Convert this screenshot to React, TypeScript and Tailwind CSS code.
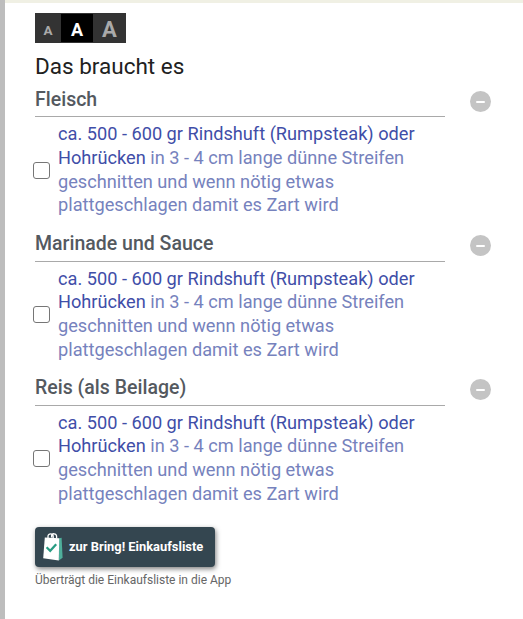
type SectionProps = {
  title: string;
  headClass: string;
  bodyClass: string;
  checkClass: string;
  sectionClass: string;
};

function Ingredient({ checkClass }: { checkClass: string }) {
  return (
    <label className="flex">
      <input
        type="checkbox"
        className={`${checkClass} -ml-[2px] size-[17px] shrink-0 appearance-none rounded-[3px] border-[1.5px] border-[#767676] bg-white`}
      />
      <span className="ml-[8px] whitespace-nowrap text-[18.2px] leading-[23.7px] text-[#7682bd]">
        <span className="text-[#3f4ea8]">ca. 500 - 600 gr Rindshuft (Rumpsteak) oder</span>
        <br />
        <span className="text-[#3f4ea8]">Hohrücken</span> in 3 - 4 cm lange dünne Streifen
        <br />
        geschnitten und wenn nötig etwas
        <br />
        plattgeschlagen damit es Zart wird
      </span>
    </label>
  );
}

function Section({ title, headClass, bodyClass, checkClass, sectionClass }: SectionProps) {
  return (
    <section className={sectionClass}>
      <div className={`flex ${headClass}`}>
        <h3 className="h-full w-[410px] border-b border-[#a9a9a9] text-[19.5px] leading-[29px] font-medium text-[#54595f]">
          {title}
        </h3>
        <button
          aria-label="Zuklappen"
          className="mt-[6px] ml-[25px] flex size-[21px] items-center justify-center rounded-full bg-[#c4c4c4]"
        >
          <span className="h-[2px] w-[9px] rounded-[1px] bg-white" />
        </button>
      </div>
      <div className={`h-[100px] ${bodyClass}`}>
        <Ingredient checkClass={checkClass} />
      </div>
    </section>
  );
}

function BagIcon() {
  return (
    <svg viewBox="0 0 20 28" className="h-[28px] w-[20px] shrink-0">
      <path d="M16 5.2 18.6 4.8 19.6 24.8 15.8 27.5Z" fill="#4faf9b" />
      <path d="M1.8 4.4 16.2 5.2 15.8 27.5 .2 25.2Z" fill="#fff" />
      <path d="M5 5.5V3.2C5 0 10.2 0 10.2 3.4v2M8.6 4.5V2.8C8.8 0 13.6 0 13.6 3.4v2" fill="none" stroke="#fff" strokeWidth="1.3" />
      <path d="m3.6 14.2 3.6 3.6 6-6.6" fill="none" stroke="#299c83" strokeWidth="2.2" />
    </svg>
  );
}

export default function App() {
  return (
    <div className="flex h-[619px] w-[523px] flex-col overflow-hidden bg-white font-['Roboto',sans-serif]">
      <div className="flex grow">
        <div className="w-[5px] shrink-0 bg-[#bdbdbd]" />
        <div className="flex grow flex-col">
          <div className="h-[3px] shrink-0 bg-[#f0f0e4]" />
          <main className="ml-[30px] mt-[10px] flex flex-col">
            <div className="flex h-[30px] w-[91px] bg-[#333] text-center font-bold text-[#aaa]">
              <span className="w-[26px] text-[13.5px] leading-[35px]">A</span>
              <span className="my-px w-[32px] bg-black text-[18px] leading-[32px] text-white">A</span>
              <span className="w-[33px] text-[22px] leading-[33px]">A</span>
            </div>
            <h2 className="mt-[8px] h-[32px] text-[22.5px] leading-[31px] text-[#212121]">Das braucht es</h2>
            <Section
              title="Fleisch"
              sectionClass="mt-[2px]"
              headClass="h-[32px]"
              bodyClass="pt-[5.3px]"
              checkClass="mt-[39.7px]"
            />
            <Section
              title="Marinade und Sauce"
              sectionClass="mt-[12px]"
              headClass="h-[33px]"
              bodyClass="pt-[4.7px]"
              checkClass="mt-[39.3px]"
            />
            <Section
              title="Reis (als Beilage)"
              sectionClass="mt-[11px]"
              headClass="h-[33px]"
              bodyClass="pt-[4.7px]"
              checkClass="mt-[39.3px]"
            />
            <button className="mt-[21px] flex h-[40px] w-[180px] items-center rounded-[4px] bg-[#344650] pl-[8px] text-[12.9px] font-bold whitespace-nowrap text-white shadow-[1px_2px_5px_rgba(0,0,0,0.5)]">
              <BagIcon />
              <span className="ml-[6px]">zur Bring! Einkaufsliste</span>
            </button>
            <p className="mt-[5px] text-[12px] leading-[16px] text-[#666]">Überträgt die Einkaufsliste in die App</p>
          </main>
        </div>
      </div>
    </div>
  );
}
